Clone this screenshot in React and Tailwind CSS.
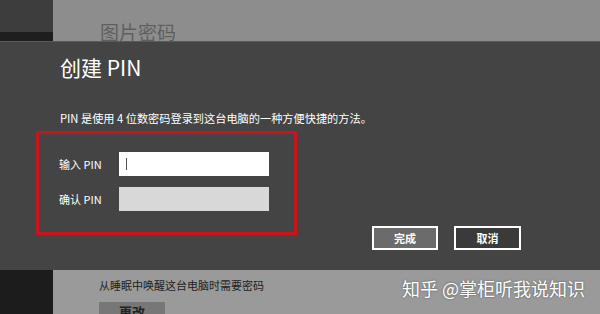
export default function App() {
  const font = { fontFamily: '"Noto Sans CJK SC", "Liberation Sans", sans-serif' };

  return (
    <div className="relative w-[600px] h-[314px] overflow-hidden bg-[#444444]" style={font}>
      {/* settings page behind, top part */}
      <div className="flex h-[41px]">
        <div className="w-[53px] flex flex-col">
          <div className="h-[32px] bg-[#3d3d3d]" />
          <div className="h-[9px] bg-[#1e1e1e]" />
        </div>
        <div className="flex-1 bg-[#8d8d8d] overflow-hidden pl-[47px] pt-[19px]">
          <div className="text-[19px] leading-[26px] text-[#5f5f5f]">图片密码</div>
        </div>
      </div>

      {/* dialog band */}
      <div className="h-[229px] bg-[#444444] border-t border-[#5a5a5a] pl-[60px] pt-[11px]">
        <div className="text-[21px] leading-[28px] text-white">创建 PIN</div>
        <div className="mt-[29px] text-[11.2px] leading-[16px] text-white">
          PIN 是使用 4 位数密码登录到这台电脑的一种方便快捷的方法。
        </div>

        <div className="flex">
          <div className="-ml-[24px] mt-[5px] w-[261px] h-[104px] border-[3px] border-[#c8141c] pl-[20px] pt-[18px] flex flex-col gap-[11px]">
            <div className="flex items-center">
              <span className="w-[60px] text-[11px] text-white">输入 PIN</span>
              <div className="w-[150px] h-[24px] bg-white flex items-center pl-[7px]">
                <div className="w-px h-[12px] bg-[#555]" />
              </div>
            </div>
            <div className="flex items-center">
              <span className="w-[60px] text-[11px] text-white">确认 PIN</span>
              <div className="w-[150px] h-[24px] bg-[#d8d8d8]" />
            </div>
          </div>
        </div>

        <div className="flex gap-[16px] ml-[312px] -mt-[9px]">
          <div className="w-[66px] h-[24px] border-2 border-white bg-[#6b6b6b] flex items-center justify-center text-[11px] font-bold text-white">
            完成
          </div>
          <div className="w-[67px] h-[24px] border-2 border-white bg-[#3a3a3a] flex items-center justify-center text-[11px] font-bold text-white">
            取消
          </div>
        </div>
      </div>

      {/* settings page behind, bottom part */}
      <div className="flex h-[44px]">
        <div className="w-[53px] bg-[#1c1c1c]" />
        <div className="flex-1 bg-[#9a9a9a] pl-[46px] pt-[6px] overflow-hidden">
          <div className="text-[11px] leading-[18px] text-[#1e1e1e]">从睡眠中唤醒这台电脑时需要密码</div>
          <div className="mt-[8px] w-[66px] h-[24px] bg-[#777777] flex justify-center text-[13px] font-bold text-[#222]">更改</div>
        </div>
      </div>

      {/* watermark */}
      <div className="absolute left-[402px] top-[276px] text-[18px] leading-[24px] text-white [text-shadow:0_0_2px_rgba(0,0,0,0.5)]">
        知乎 @掌柜听我说知识
      </div>
    </div>
  );
}
